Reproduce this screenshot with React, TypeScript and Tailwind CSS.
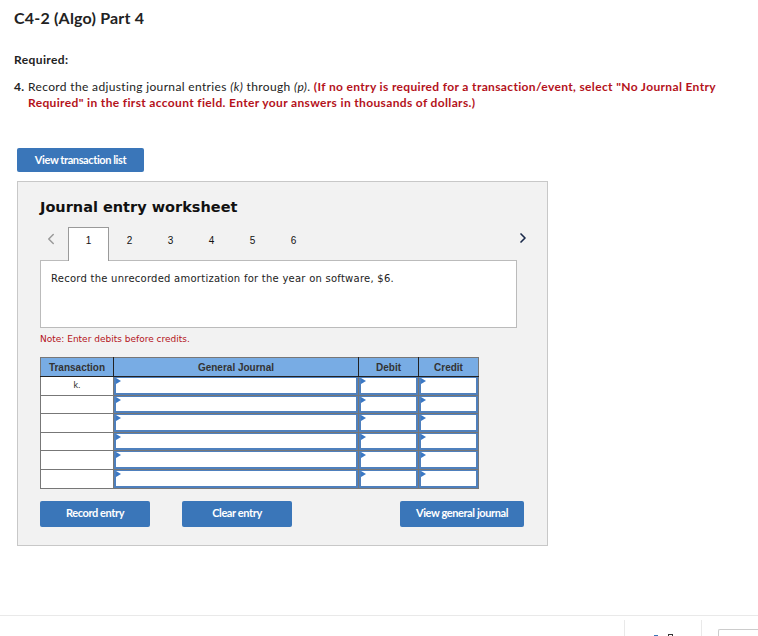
import { ChevronLeft, ChevronRight } from 'lucide-react';

const tabs = ['1', '2', '3', '4', '5', '6'];
const rows = ['k.', '', '', '', '', ''];

function Flag() {
  return (
    <span className="absolute left-0 top-0 h-0 w-0 border-y-[3px] border-l-[5px] border-y-transparent border-l-[#3b78c4]" />
  );
}

function InputCell() {
  return (
    <td className="h-[18px] border border-[#777] p-0">
      <div className="relative h-full border-2 border-[#4f80bd] border-t-[1px] bg-white">
        <Flag />
      </div>
    </td>
  );
}

export default function App() {
  return (
    <div className="relative h-[636px] w-[758px] overflow-hidden bg-white text-[#222]" style={{ fontFamily: 'Lato, "Liberation Sans", sans-serif' }}>
      <div className="px-[14px] pt-[8px]">
        <h1 className="text-[16px] font-bold leading-[20px] tracking-[0.2px] text-[#222]">C4-2 (Algo) Part 4</h1>
        <p className="mt-[24px] text-[12px] font-bold leading-[16px] tracking-[0.4px]">Required:</p>
        <div className="mt-[11px] flex text-[12px] leading-[16px] tracking-[0.35px]">
          <span className="w-[14px] shrink-0 font-bold">4.</span>
          <p className="w-[712px]">
            Record the adjusting journal entries <i>(k)</i> through <i>(p)</i>.{' '}
            <b className="text-[#b4121b]">
              (If no entry is required for a transaction/event, select "No Journal Entry Required" in the first account field. Enter your answers in thousands of dollars.)
            </b>
          </p>
        </div>
      </div>

      <div className="mt-[37px] px-[17px]">
        <button className="flex h-[24px] w-[127px] items-center justify-center rounded-[2px] bg-[#3a76b9] text-[11px] font-bold tracking-[-0.4px] text-white">
          View transaction list
        </button>

        <div className="mt-[9px] h-[365px] w-[531px] border border-[#c8c8c8] bg-[#f2f2f2] px-[22px] pt-[16px]" style={{ fontFamily: '"DejaVu Sans", Verdana, sans-serif' }}>
          <h2 className="text-[14.5px] font-bold leading-[18px] text-[#111]">Journal entry worksheet</h2>

          <div className="mt-[11px] flex h-[33px] items-start">
            <div className="flex h-[24px] w-[28px] items-center pl-[2px] text-[#9a9a9a]">
              <ChevronLeft size={18} strokeWidth={2} />
            </div>
            {tabs.map((t, i) => (
              <div
                key={t}
                className={
                  i === 0
                    ? 'relative z-10 flex h-[34px] w-[41px] items-start justify-center border border-b-0 border-[#9a9a9a] bg-white pt-[5px] text-[10px] text-[#111]'
                    : 'flex h-[33px] w-[41px] items-start justify-center pt-[6px] text-[10px] text-[#111]'
                }
                style={{ fontFamily: '"Liberation Sans", Arial, sans-serif' }}
              >
                {t}
              </div>
            ))}
            <div className="ml-auto mr-[-6px] flex h-[22px] items-center text-[#1a2a4a]">
              <ChevronRight size={16} strokeWidth={2.5} />
            </div>
          </div>

          <div className="h-[68px] w-[477px] border border-[#bbb] bg-white px-[10px] pt-[10px] text-[10px] tracking-[0.25px] text-[#222]">
            Record the unrecorded amortization for the year on software, $6.
          </div>

          <p className="mt-[5px] text-[9px] leading-[12px] text-[#b4121b]">Note: Enter debits before credits.</p>

          <table className="mt-[12px] w-[439px] table-fixed border-collapse border border-[#777]" style={{ fontFamily: '"Liberation Sans", Arial, sans-serif' }}>
            <colgroup>
              <col className="w-[73px]" />
              <col className="w-[245px]" />
              <col className="w-[60px]" />
              <col className="w-[60px]" />
            </colgroup>
            <thead>
              <tr className="h-[19px] bg-[#78ace4] text-[10px] font-bold text-[#333]">
                <th className="border border-[#777] border-b-[#222] border-r-[#222]">Transaction</th>
                <th className="border border-[#777] border-b-[#222] border-r-[#222]">General Journal</th>
                <th className="border border-[#777] border-b-[#222] border-r-[#222]">Debit</th>
                <th className="border border-[#777] border-b-[#222]">Credit</th>
              </tr>
            </thead>
            <tbody>
              {rows.map((r, i) => (
                <tr key={i} className="h-[18.6px]">
                  <td className="border border-[#777] bg-white p-0 text-center align-top text-[9px] leading-[16px] text-[#333]">{r}</td>
                  <InputCell />
                  <InputCell />
                  <InputCell />
                </tr>
              ))}
            </tbody>
          </table>

          <div className="mt-[12px] flex text-[11px] font-bold tracking-[-0.4px] text-white" style={{ fontFamily: 'Lato, "Liberation Sans", sans-serif' }}>
            <button className="h-[26px] w-[110px] rounded-[2px] bg-[#3a76b9]">Record entry</button>
            <button className="ml-[32px] h-[26px] w-[110px] rounded-[2px] bg-[#3a76b9]">Clear entry</button>
            <button className="ml-[108px] h-[26px] w-[124px] rounded-[2px] bg-[#3a76b9]">View general journal</button>
          </div>
        </div>
      </div>

      <div className="mt-[69px] flex h-[22px] border-t border-[#e9e9e9]">
        <div className="flex-1" />
        <div className="mt-[4px] flex w-[78px] items-end justify-center gap-[10px] border-l border-r border-[#e9e9e9] pb-0">
          <span className="mb-[-2px] h-[4px] w-[4px] bg-[#3a76b9]" />
          <span className="mb-[-2px] h-[5px] w-[5px] border border-[#333]" />
        </div>
        <div className="ml-[16px] mt-[13px] w-[40px] rounded-tl-[2px] border-l border-t border-[#ccc]" />
      </div>
    </div>
  );
}
